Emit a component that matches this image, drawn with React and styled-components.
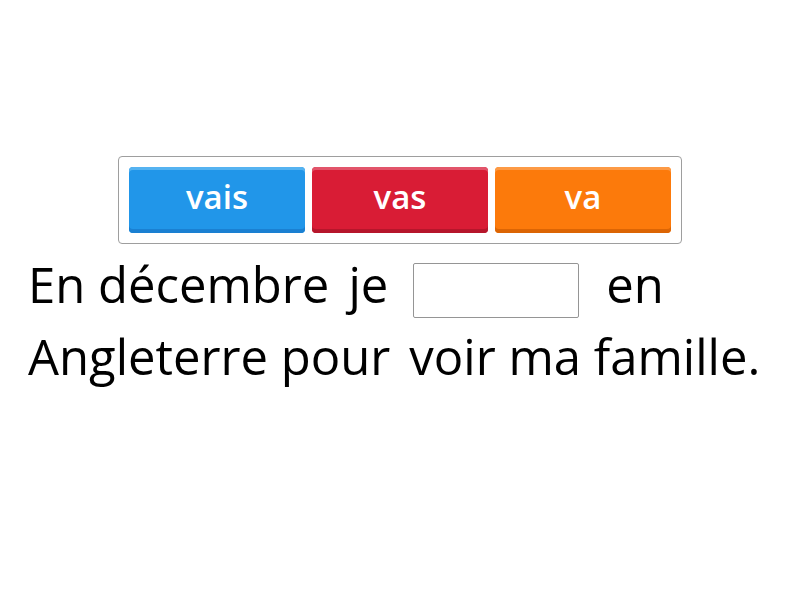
import React from "react"
import styled, { createGlobalStyle } from "styled-components"

const GlobalStyle = createGlobalStyle`
  html, body {
    margin: 0;
    padding: 0;
    background: #fff;
    font-family: "Open Sans", "Liberation Sans", sans-serif;
  }
`

const Page = styled.div`
  width: 800px;
  height: 600px;
  padding-top: 156px;
  box-sizing: border-box;
  display: flex;
  flex-direction: column;
  align-items: center;
`

const Bank = styled.div`
  display: flex;
  gap: 7px;
  padding: 10px;
  border: 1px solid #9e9e9e;
  border-radius: 4px;
`

const colors = {
  blue: { base: "#2196e9", top: "#55b3f1", bottom: "#1a80d2" },
  red: { base: "#d91c35", top: "#e2546a", bottom: "#b6162b" },
  orange: { base: "#fc7a0b", top: "#fd9a45", bottom: "#dc6504" },
}

const Tile = styled.div`
  width: 176px;
  height: 66px;
  box-sizing: border-box;
  border-radius: 4px;
  background: ${(p) => colors[p.color].base};
  box-shadow: inset 0 3px 0 ${(p) => colors[p.color].top},
    inset 0 -4px 0 ${(p) => colors[p.color].bottom};
  display: flex;
  align-items: center;
  justify-content: center;
  color: #fff;
  font-weight: 600;
  font-size: 33px;
  padding-bottom: 8px;
`

const Sentence = styled.div`
  width: 765px;
  margin-top: 19px;
  padding-left: 28px;
  align-self: flex-start;
  display: flex;
  flex-wrap: wrap;
  align-items: flex-start;
  row-gap: 17px;
  column-gap: 19px;
  font-size: 49px;
  color: #000;
  line-height: 43px;
`

const Word = styled.span`
  white-space: nowrap;
`

const Blank = styled.div`
  width: 166px;
  height: 55px;
  box-sizing: border-box;
  border: 1px solid #959595;
  border-radius: 2px;
  margin: 0 8px 0 6px;
`

export default function App() {
  return (
    <>
      <GlobalStyle />
      <Page>
        <Bank>
          <Tile color="blue">vais</Tile>
          <Tile color="red">vas</Tile>
          <Tile color="orange">va</Tile>
        </Bank>
        <Sentence>
          <Word>En décembre</Word>
          <Word>je</Word>
          <Blank />
          <Word>en</Word>
          <Word>Angleterre pour</Word>
          <Word>voir ma famille.</Word>
        </Sentence>
      </Page>
    </>
  )
}
